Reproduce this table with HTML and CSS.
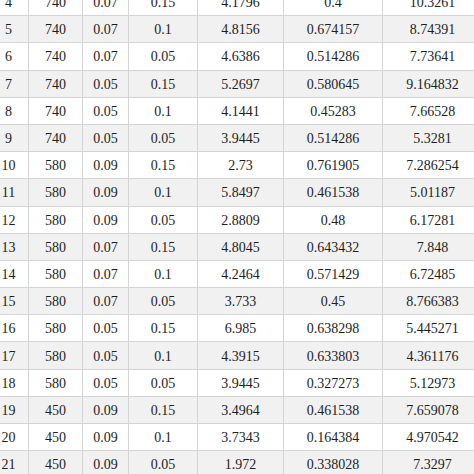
FILE: index.html
```html
<!DOCTYPE html>
<html>
<head>
<meta charset="utf-8">
<link rel="stylesheet" href="styles.css">
</head>
<body>
<div class="frame">
<table class="data">
<colgroup>
<col class="c1"><col class="c2"><col class="c3"><col class="c4"><col class="c5"><col class="c6"><col class="c7">
</colgroup>
<tbody>
<tr><td class="idx">4</td><td>740</td><td>0.07</td><td>0.15</td><td>4.1796</td><td>0.4</td><td>10.3261</td></tr>
<tr><td class="idx">5</td><td>740</td><td>0.07</td><td>0.1</td><td>4.8156</td><td>0.674157</td><td>8.74391</td></tr>
<tr><td class="idx">6</td><td>740</td><td>0.07</td><td>0.05</td><td>4.6386</td><td>0.514286</td><td>7.73641</td></tr>
<tr><td class="idx">7</td><td>740</td><td>0.05</td><td>0.15</td><td>5.2697</td><td>0.580645</td><td>9.164832</td></tr>
<tr><td class="idx">8</td><td>740</td><td>0.05</td><td>0.1</td><td>4.1441</td><td>0.45283</td><td>7.66528</td></tr>
<tr><td class="idx">9</td><td>740</td><td>0.05</td><td>0.05</td><td>3.9445</td><td>0.514286</td><td>5.3281</td></tr>
<tr><td class="idx">10</td><td>580</td><td>0.09</td><td>0.15</td><td>2.73</td><td>0.761905</td><td>7.286254</td></tr>
<tr><td class="idx">11</td><td>580</td><td>0.09</td><td>0.1</td><td>5.8497</td><td>0.461538</td><td>5.01187</td></tr>
<tr><td class="idx">12</td><td>580</td><td>0.09</td><td>0.05</td><td>2.8809</td><td>0.48</td><td>6.17281</td></tr>
<tr><td class="idx">13</td><td>580</td><td>0.07</td><td>0.15</td><td>4.8045</td><td>0.643432</td><td>7.848</td></tr>
<tr><td class="idx">14</td><td>580</td><td>0.07</td><td>0.1</td><td>4.2464</td><td>0.571429</td><td>6.72485</td></tr>
<tr><td class="idx">15</td><td>580</td><td>0.07</td><td>0.05</td><td>3.733</td><td>0.45</td><td>8.766383</td></tr>
<tr><td class="idx">16</td><td>580</td><td>0.05</td><td>0.15</td><td>6.985</td><td>0.638298</td><td>5.445271</td></tr>
<tr><td class="idx">17</td><td>580</td><td>0.05</td><td>0.1</td><td>4.3915</td><td>0.633803</td><td>4.361176</td></tr>
<tr><td class="idx">18</td><td>580</td><td>0.05</td><td>0.05</td><td>3.9445</td><td>0.327273</td><td>5.12973</td></tr>
<tr><td class="idx">19</td><td>450</td><td>0.09</td><td>0.15</td><td>3.4964</td><td>0.461538</td><td>7.659078</td></tr>
<tr><td class="idx">20</td><td>450</td><td>0.09</td><td>0.1</td><td>3.7343</td><td>0.164384</td><td>4.970542</td></tr>
<tr><td class="idx">21</td><td>450</td><td>0.09</td><td>0.05</td><td>1.972</td><td>0.338028</td><td>7.3297</td></tr>
</tbody>
</table>
</div>
</body>
</html>
```

FILE: styles.css
```css
html, body {
  margin: 0;
  padding: 0;
  background: #ffffff;
}
.frame {
  width: 474px;
  height: 474px;
  overflow: hidden;
}
.data {
  border-collapse: collapse;
  table-layout: fixed;
  width: 482px;
  margin-top: -12px;
  margin-left: -1px;
  font-family: "Liberation Serif", "Times New Roman", serif;
  font-size: 14px;
  color: #1e1e1e;
}
.c1 { width: 29px; }
.c2 { width: 54px; }
.c3 { width: 46px; }
.c4 { width: 69px; }
.c5 { width: 86px; }
.c6 { width: 99px; }
.c7 { width: 100px; }
.data tr {
  height: 27.2px;
}
.data tr:nth-child(even) {
  background: #f1f1f1;
}
.data td {
  border: 1px solid #d4d4d4;
  padding: 2px 0 0 0;
  text-align: center;
  white-space: nowrap;
  vertical-align: middle;
  line-height: 16px;
}
.data td.idx {
  padding-right: 11px;
}
```
